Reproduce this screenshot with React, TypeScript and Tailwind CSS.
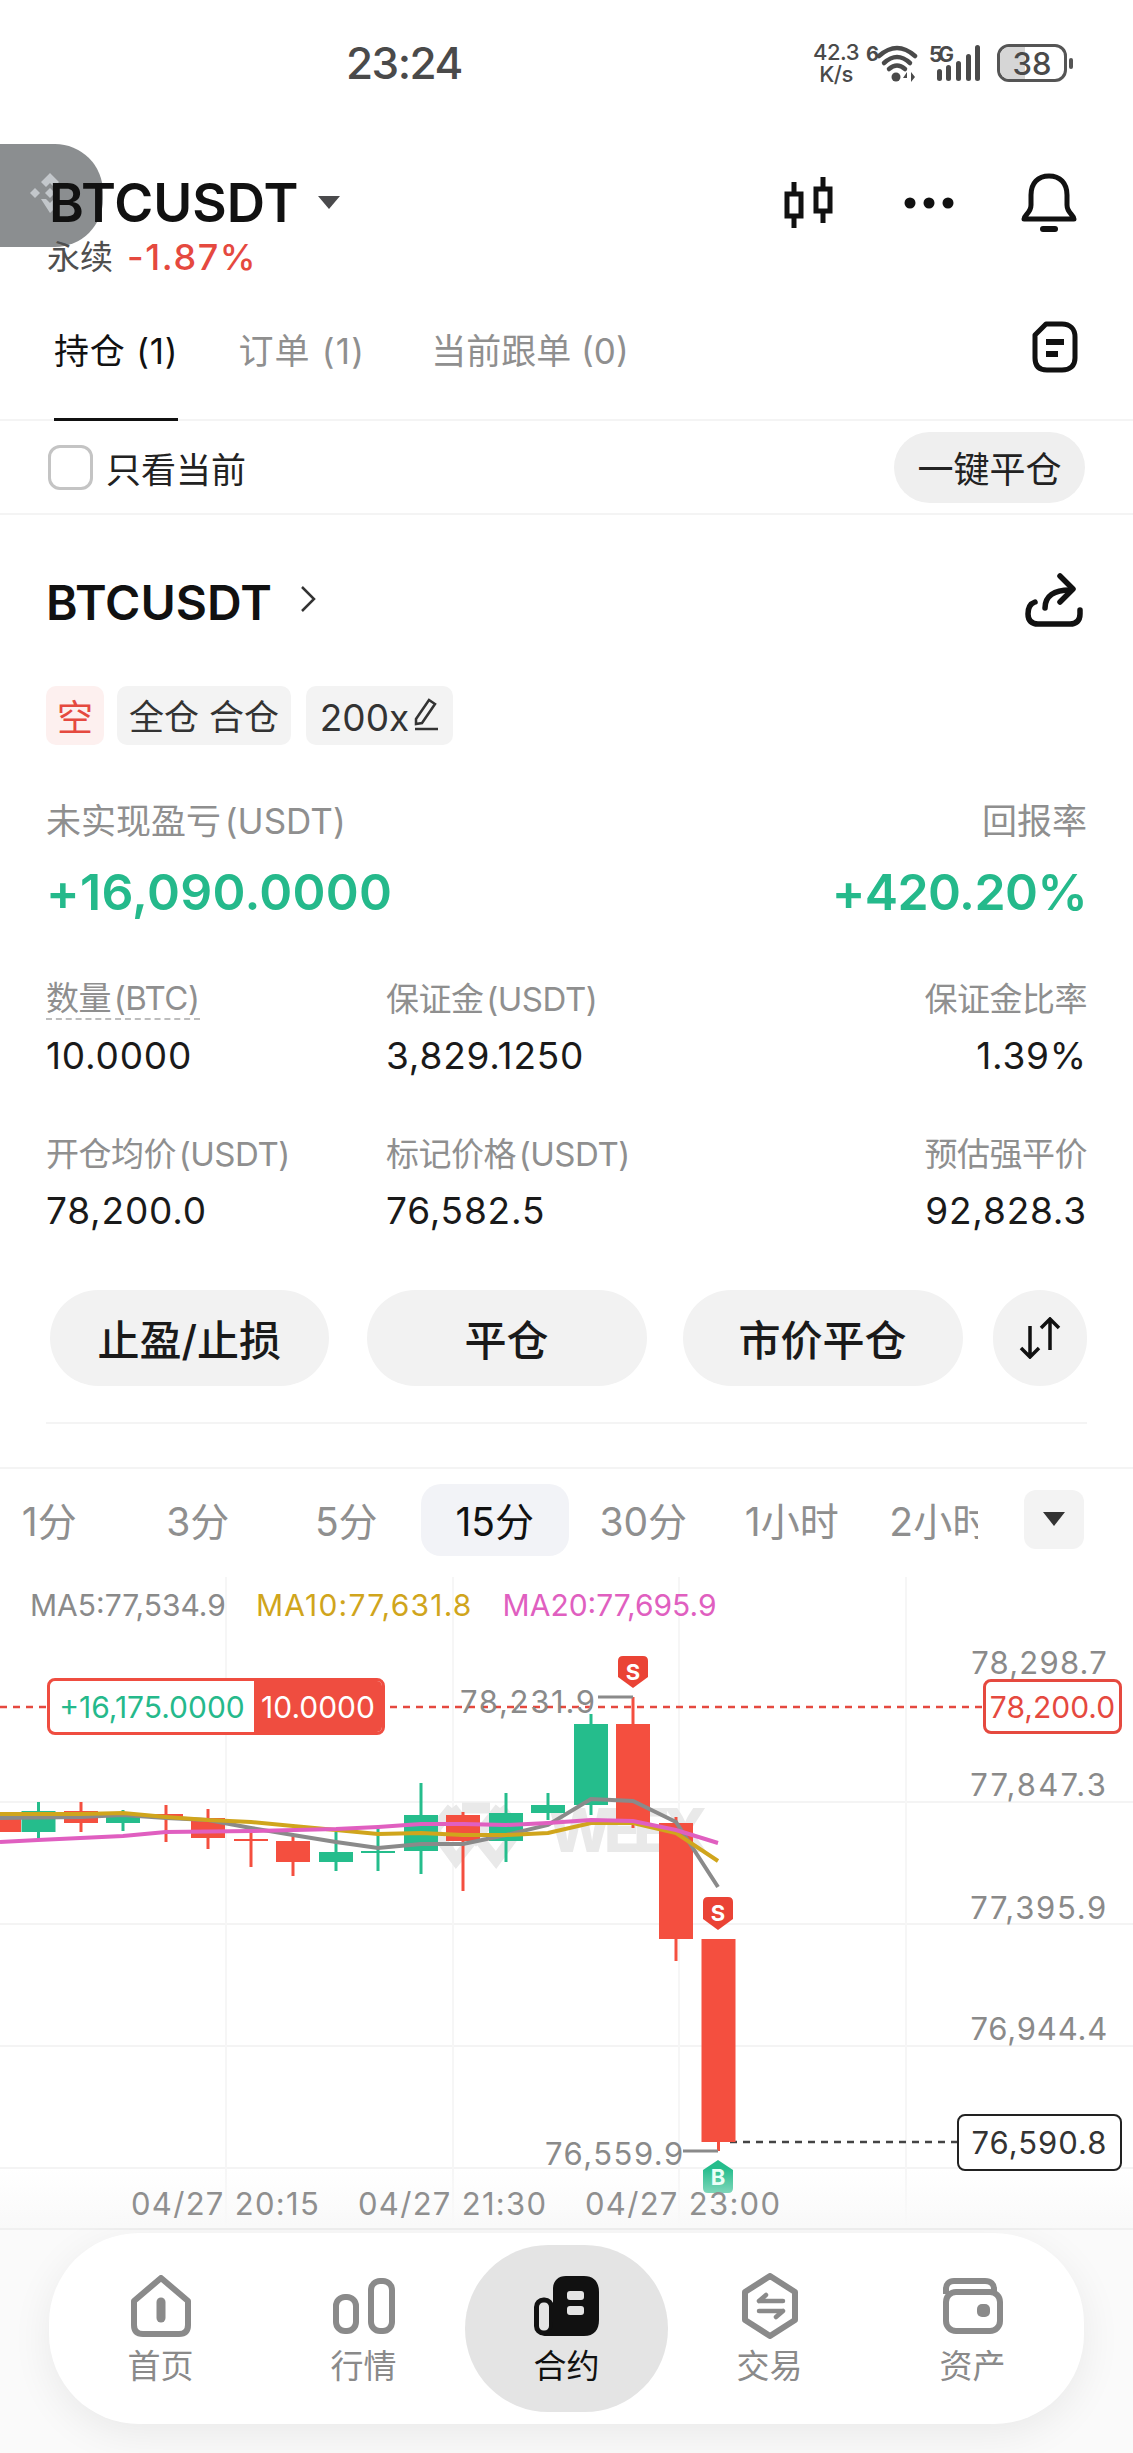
import type { ReactNode } from 'react';

const candles = [
  { x: 4, top: 1817, bottom: 1832, wickTop: 1817, wickBottom: 1832, up: false },
  { x: 38.5, top: 1811, bottom: 1832, wickTop: 1802, wickBottom: 1839, up: true },
  { x: 81, top: 1811, bottom: 1823, wickTop: 1802, wickBottom: 1832, up: false },
  { x: 123, top: 1814, bottom: 1823, wickTop: 1810, wickBottom: 1831, up: true },
  { x: 166, top: 1814, bottom: 1818, wickTop: 1805, wickBottom: 1842, up: false },
  { x: 208, top: 1818, bottom: 1838, wickTop: 1809, wickBottom: 1849, up: false },
  { x: 251, top: 1839, bottom: 1841, wickTop: 1830, wickBottom: 1867, up: false },
  { x: 293, top: 1841, bottom: 1862, wickTop: 1835, wickBottom: 1876, up: false },
  { x: 336, top: 1852, bottom: 1862, wickTop: 1832, wickBottom: 1871, up: true },
  { x: 378, top: 1851, bottom: 1852, wickTop: 1828, wickBottom: 1871, up: true },
  { x: 421, top: 1815, bottom: 1851, wickTop: 1783, wickBottom: 1874, up: true },
  { x: 463, top: 1815, bottom: 1841, wickTop: 1812, wickBottom: 1891, up: false },
  { x: 506, top: 1813, bottom: 1841, wickTop: 1793, wickBottom: 1862, up: true },
  { x: 548, top: 1805, bottom: 1813, wickTop: 1793, wickBottom: 1820, up: true },
  { x: 591, top: 1724, bottom: 1805, wickTop: 1714, wickBottom: 1815, up: true },
  { x: 633, top: 1724, bottom: 1823, wickTop: 1697, wickBottom: 1828, up: false },
  { x: 676, top: 1823, bottom: 1939, wickTop: 1817, wickBottom: 1961, up: false },
  { x: 718.5, top: 1939, bottom: 2142, wickTop: 1939, wickBottom: 2151, up: false },
];

const ma5 = '0,1818 81,1817 123,1815 166,1818 208,1820 251,1828 293,1835 336,1842 378,1848 421,1844 463,1844 506,1835 548,1825 591,1799 633,1801 676,1822 718,1887';
const ma10 = '0,1814 81,1814 123,1813 166,1817 208,1820 251,1822 293,1826 336,1830 378,1834 421,1833 463,1835 506,1835 548,1833 591,1823 633,1823 676,1833 718,1861';
const ma20 = '0,1842 38,1840 123,1836 166,1832 251,1831 336,1829 378,1827 421,1824 463,1824 506,1825 548,1823 591,1820 633,1821 676,1830 718,1843';

const frames = ['1分', '3分', '5分', '15分', '30分', '1小时', '2小时'];

function StatusBar() {
  return (
    <div className="h-[126px] flex items-center justify-between pl-[346px] pr-[60px] text-[#4a4a4a]">
      <span className="text-[44px] font-medium leading-none tracking-[-1.5px]">23:24</span>
      <div className="flex items-center">
        <div className="w-[46px] flex flex-col items-center text-[22px] leading-[22px] font-medium tracking-[-0.5px]">
          <span>42.3</span>
          <span>K/s</span>
        </div>
        <svg width="56" height="40" viewBox="0 0 56 40" className="ml-[7px]">
          <text x="0" y="18" fontSize="20" fontWeight="700" fill="#4a4a4a">6</text>
          <path d="M13 13 Q31 -3 49 13" fill="none" stroke="#4a4a4a" strokeWidth="4.5" strokeLinecap="round" />
          <path d="M18 20 Q31 8 44 20" fill="none" stroke="#4a4a4a" strokeWidth="4.5" strokeLinecap="round" />
          <path d="M23 26 Q31 19 39 26" fill="none" stroke="#4a4a4a" strokeWidth="4.5" strokeLinecap="round" />
          <circle cx="30" cy="34" r="4.5" fill="#4a4a4a" />
          <path d="M37 35 L41 29 V35 Z M45 29 L49 34 L45 39 Z" fill="#4a4a4a" />
        </svg>
        <svg width="56" height="38" viewBox="0 0 56 38" className="ml-[7px]">
          <text x="0" y="18" fontSize="21" fontWeight="700" fill="#4a4a4a" textLength="25">5G</text>
          <rect x="8" y="25" width="5" height="12" rx="2.5" fill="#4a4a4a" />
          <rect x="17" y="21" width="5" height="16" rx="2.5" fill="#4a4a4a" />
          <rect x="27" y="17" width="5" height="20" rx="2.5" fill="#4a4a4a" />
          <rect x="37" y="10" width="5" height="27" rx="2.5" fill="#4a4a4a" />
          <rect x="46" y="1" width="5" height="36" rx="2.5" fill="#4a4a4a" />
        </svg>
        <div className="ml-[12px] relative w-[70px] h-[38px] rounded-[12px] border-[3px] border-[#555] flex items-center justify-center overflow-hidden">
          <div className="absolute left-0 top-0 bottom-0 w-[25px] bg-[#d6d6d6]" />
          <span className="relative text-[31px] leading-none font-medium">38</span>
        </div>
        <div className="ml-[2px] w-[4px] h-[11px] rounded-full bg-[#555]" />
      </div>
    </div>
  );
}

function Header() {
  return (
    <div className="relative">
      <div className="absolute left-0 top-[18px] w-[103px] h-[103px] rounded-r-[48px] bg-[#8b8e90]">
        <svg width="42" height="40" viewBox="0 0 42 40" className="absolute left-[30px] top-[29px]" fill="#c3c7cb">
          <path d="M20 0 L29 9 L24 14 L20 10 L16 14 L11 9 Z" />
          <path d="M5 15 L10 20 L5 25 L0 20 Z" />
          <path d="M20 15 L25 20 L20 25 L15 20 Z" />
          <path d="M11 26 L16 26 L20 30 L24 26 L29 31 L20 40 Z" />
        </svg>
      </div>
      <div className="relative pl-[49px] pr-[56px] pt-[47px] flex items-center justify-between h-[107px]">
        <div className="flex items-center">
          <span className="text-[53px] font-semibold text-[#111] leading-none">BTCUSDT</span>
          <svg width="22" height="14" viewBox="0 0 22 14" className="ml-[20px]"><path d="M0 0 H22 L11 13 Z" fill="#4a4a4c" /></svg>
        </div>
        <div className="flex items-center">
          <svg width="50" height="52" viewBox="0 0 50 52" fill="none" stroke="#111" strokeWidth="5">
            <rect x="3" y="17" width="14" height="22" />
            <path d="M10 5 V17 M10 39 V51" />
            <rect x="32" y="12" width="14" height="22" />
            <path d="M39 0 V12 M39 34 V46" />
          </svg>
          <svg width="50" height="12" viewBox="0 0 50 12" fill="#111" className="ml-[70px]">
            <circle cx="6" cy="6" r="5.5" /><circle cx="25" cy="6" r="5.5" /><circle cx="44" cy="6" r="5.5" />
          </svg>
          <svg width="56" height="60" viewBox="0 0 56 60" fill="none" stroke="#111" strokeWidth="5" strokeLinejoin="round" className="ml-[67px]">
            <path d="M3 46 C3 42 10 40 10 32 V22 C10 10 17 3 28 3 C39 3 46 10 46 22 V32 C46 40 53 42 53 46 Z" />
            <path d="M22 56 H34" strokeLinecap="round" strokeWidth="6" />
          </svg>
        </div>
      </div>
      <div className="relative h-[40px] mt-[4px] pl-[47px] flex items-center">
        <span className="text-[33px] text-[#4f4f4f] leading-none">永续</span>
        <span className="ml-[14px] text-[36px] font-medium text-[#e5493f] leading-none tracking-[1.6px]">-1.87%</span>
      </div>
    </div>
  );
}

function Tabs() {
  return (
    <div className="h-[144px] border-b-2 border-[#f4f4f4] flex items-stretch justify-between pl-[54px] pr-[55px]">
      <div className="flex items-stretch">
        <div className="h-[144px] pt-[7px] border-b-[3px] border-[#111] flex items-center text-[35px] text-[#111] leading-none tracking-[0.8px]">持仓 (1)</div>
        <div className="ml-[60px] pt-[7px] flex items-center text-[35px] text-[#8f8f8f] leading-none tracking-[1.2px]">订单 (1)</div>
        <div className="ml-[66px] pt-[7px] flex items-center text-[35px] text-[#8f8f8f] leading-none">当前跟单 (0)</div>
      </div>
      <div className="flex items-center pb-[2px]">
        <svg width="46" height="52" viewBox="0 0 46 52" fill="none" stroke="#111" strokeWidth="5" strokeLinejoin="round">
          <path d="M14 3 H30 C38 3 43 8 43 16 V37 C43 45 38 49 30 49 H15 C7 49 3 45 3 37 V14 Z" />
          <path d="M14 21 H32 M14 33 H26" strokeWidth="6" />
        </svg>
      </div>
    </div>
  );
}

function FilterRow() {
  return (
    <div className="h-[94px] border-b-2 border-[#f4f4f4] flex items-center justify-between pl-[48px] pr-[48px]">
      <div className="flex items-center">
        <div className="w-[45px] h-[45px] rounded-[12px] border-[3px] border-[#c4c4c4]" />
        <span className="ml-[13px] pt-[6px] text-[35px] text-[#222] leading-none">只看当前</span>
      </div>
      <div className="w-[191px] h-[71px] pt-[5px] rounded-full bg-[#efefef] flex items-center justify-center text-[36px] text-[#222] leading-none">一键平仓</div>
    </div>
  );
}

function Stat({ label, value, right, dotted }: { label: string; value: string; right?: boolean; dotted?: boolean }) {
  return (
    <div className={right ? 'flex flex-col items-end' : 'flex flex-col items-start'}>
      <div className="h-[44px] flex items-center">
        <span className={dotted ? 'text-[33px] text-[#8f8f8f] leading-[40px] tracking-[-0.5px] [word-spacing:-6px] border-b-2 border-dashed border-[#bdbdbd]' : 'text-[33px] text-[#8f8f8f] leading-[40px] tracking-[-0.5px] [word-spacing:-6px]'}>{label}</span>
      </div>
      <div className="mt-[12px] h-[44px] flex items-center text-[37px] text-[#1a1a1a] leading-none tracking-[0.8px]">{value}</div>
    </div>
  );
}

function ActionButton({ children }: { children: ReactNode }) {
  return <div className="w-[280px] h-[96px] pt-[6px] rounded-full bg-[#f2f2f2] flex items-center justify-center text-[42px] font-medium text-[#1a1a1a] leading-none">{children}</div>;
}

function PositionCard() {
  return (
    <div className="px-[46px]">
      <div className="mt-[58px] h-[60px] flex items-center justify-between">
        <div className="flex items-center">
          <span className="text-[48px] font-semibold text-[#111] leading-none">BTCUSDT</span>
          <svg width="18" height="28" viewBox="0 0 18 28" fill="none" stroke="#333" strokeWidth="2.5" className="ml-[27px] mb-[8px]"><path d="M3 2 L15 14 L3 26" /></svg>
        </div>
        <svg width="60" height="56" viewBox="0 0 60 56" fill="none" stroke="#111" strokeWidth="5.5" strokeLinecap="round" strokeLinejoin="round" className="mr-[3px] mb-[6px]">
          <path d="M21 36 C21 24 30 18 46 18" />
          <path d="M36 4 L49 17 L36 30" />
          <path d="M11 30 C5 32 4 38 4 42 C4 49 8 52 14 52 H46 C52 52 56 49 56 42 V38" />
        </svg>
      </div>
      <div className="mt-[53px] flex items-stretch h-[59px]">
        <div className="w-[58px] pt-[4px] rounded-[10px] bg-[#fdf0ef] flex items-center justify-center text-[36px] text-[#e5493f] leading-none">空</div>
        <div className="ml-[13px] w-[174px] pt-[4px] rounded-[10px] bg-[#f3f3f3] flex items-center justify-center text-[35px] text-[#333] leading-none">全仓 合仓</div>
        <div className="ml-[15px] w-[147px] pt-[4px] rounded-[10px] bg-[#f3f3f3] flex items-center justify-center text-[37px] text-[#333] leading-none">
          200x
          <svg width="26" height="34" viewBox="0 0 26 34" fill="none" stroke="#333" strokeWidth="2.5" className="ml-[4px] mb-[8px]">
            <path d="M3 22 L16 3 L22 7 L9 26 L3 27 Z" />
            <path d="M2 32 H25" />
          </svg>
        </div>
      </div>
      <div className="mt-[54px] h-[44px] flex items-center justify-between text-[35px] text-[#8f8f8f] leading-none [word-spacing:-6px]">
        <span>未实现盈亏 (USDT)</span>
        <span>回报率</span>
      </div>
      <div className="mt-[18px] h-[62px] flex items-center justify-between text-[50px] font-semibold text-[#25b98b] leading-none">
        <span className="tracking-[0.3px]">+16,090.0000</span>
        <span className="tracking-[-0.6px]">+420.20%</span>
      </div>
      <div className="mt-[54px] grid grid-cols-[340px_1fr_auto]">
        <Stat label="数量 (BTC)" value="10.0000" dotted />
        <Stat label="保证金 (USDT)" value="3,829.1250" />
        <Stat label="保证金比率" value="1.39%" right />
      </div>
      <div className="mt-[55px] grid grid-cols-[340px_1fr_auto]">
        <Stat label="开仓均价 (USDT)" value="78,200.0" />
        <Stat label="标记价格 (USDT)" value="76,582.5" />
        <Stat label="预估强平价" value="92,828.3" right />
      </div>
      <div className="mt-[58px] pl-[4px] flex items-center">
        <ActionButton>止盈/止损</ActionButton>
        <div className="ml-[38px]"><ActionButton>平仓</ActionButton></div>
        <div className="ml-[36px]"><ActionButton>市价平仓</ActionButton></div>
        <div className="ml-[30px] w-[95px] h-[96px] rounded-full bg-[#f2f2f2] flex items-center justify-center">
          <svg width="42" height="42" viewBox="0 0 42 42" fill="none" stroke="#111" strokeWidth="3.5">
            <path d="M11 9 V40 M2 31 L11 40 L20 31" />
            <path d="M31 33 V2 M22 11 L31 2 L40 11" />
          </svg>
        </div>
      </div>
      <div className="mt-[36px] h-[2px] bg-[#f4f4f4]" />
    </div>
  );
}

function TimeFrames() {
  return (
    <div className="mt-[43px] border-t-2 border-[#f4f4f4] h-[110px] pb-[7px] flex items-center">
      <div className="w-[978px] overflow-hidden">
        <div className="flex ml-[-25px]">
          {frames.map((f) => (
            <div key={f} className={f === '15分' ? 'w-[148.5px] h-[72px] pt-[4px] shrink-0 rounded-[20px] bg-[#f2f3f7] flex items-center justify-center text-[39px] text-[#111] leading-none' : 'w-[148.5px] h-[72px] pt-[4px] shrink-0 flex items-center justify-center text-[39px] text-[#8f8f8f] leading-none'}>
              {f}
            </div>
          ))}
        </div>
      </div>
      <div className="ml-[46px] w-[60px] h-[59px] rounded-[12px] bg-[#f3f3f3] flex items-center justify-center">
        <svg width="22" height="15" viewBox="0 0 22 15"><path d="M0 0 H22 L11 14 Z" fill="#333" /></svg>
      </div>
    </div>
  );
}

function Chart() {
  return (
    <div className="relative h-[651px] overflow-hidden">
      <svg width="1133" height="651" viewBox="0 1577 1133 651" className="absolute left-0 top-0">
        {[1802, 1924, 2046, 2168].map((y) => <line key={y} x1="0" x2="1133" y1={y} y2={y} stroke="#f4f4f4" strokeWidth="2" />)}
        {[226, 453, 679, 906].map((x) => <line key={x} x1={x} x2={x} y1="1577" y2="2228" stroke="#f6f6f6" strokeWidth="2" />)}

        <g fill="none" stroke="#e9e9e9" strokeWidth="11" strokeLinejoin="miter">
          <path d="M452 1808 L434 1830 L456 1860 L476 1835 L496 1860 L518 1830 L500 1808" />
          <path d="M452 1808 L476 1838 L500 1808 M462 1808 H490" />
        </g>
        <text x="548" y="1852" fontSize="60" fontWeight="800" fill="#e9e9e9" fontFamily="Inter" textLength="160">WEEX</text>

        <line x1="0" x2="983" y1="1707" y2="1707" stroke="#e5493f" strokeWidth="2.5" strokeDasharray="7 6" />
        <line x1="730" x2="957" y1="2142" y2="2142" stroke="#444" strokeWidth="2.5" strokeDasharray="7 6" />

        {candles.map((c) => {
          const color = c.up ? '#25bd8c' : '#f44f3f';
          return (
            <g key={c.x}>
              <line x1={c.x} x2={c.x} y1={c.wickTop} y2={c.wickBottom} stroke={color} strokeWidth="3" />
              <rect x={c.x - 17} y={c.top} width="34" height={Math.max(c.bottom - c.top, 2)} fill={color} />
            </g>
          );
        })}

        <polyline points={ma5} fill="none" stroke="#8a8a8a" strokeWidth="4" />
        <polyline points={ma10} fill="none" stroke="#d0a51c" strokeWidth="4" />
        <polyline points={ma20} fill="none" stroke="#e05fc0" strokeWidth="4" />

        <text x="460" y="1713" fontSize="31" fill="#8a8a8a" letterSpacing="1.7">78,231.9</text>
        <path d="M598 1697 H633" stroke="#8a8a8a" strokeWidth="3" />
        <text x="545" y="2165" fontSize="31" fill="#8a8a8a" letterSpacing="1.5">76,559.9</text>
        <path d="M683 2151 H718" stroke="#8a8a8a" strokeWidth="3" />

        <text x="1108" y="1674" textAnchor="end" fontSize="31" fill="#8a8a8a" letterSpacing="1.2">78,298.7</text>
        <text x="1108" y="1796" textAnchor="end" fontSize="31" fill="#8a8a8a" letterSpacing="2.2">77,847.3</text>
        <text x="1108" y="1919" textAnchor="end" fontSize="31" fill="#8a8a8a" letterSpacing="1.7">77,395.9</text>
        <text x="1108" y="2040" textAnchor="end" fontSize="31" fill="#8a8a8a" letterSpacing="0.8">76,944.4</text>

        <path d="M623 1656 H643 Q648 1656 648 1661 V1677 L633 1688 L618 1677 V1661 Q618 1656 623 1656 Z" fill="#ea4335" />
        <text x="633" y="1680" textAnchor="middle" fontSize="22" fontWeight="700" fill="#fff">S</text>
        <path d="M708 1897 H728 Q733 1897 733 1902 V1919 L718 1930 L703 1919 V1902 Q703 1897 708 1897 Z" fill="#ea4335" />
        <text x="718" y="1921" textAnchor="middle" fontSize="22" fontWeight="700" fill="#fff">S</text>
        <path d="M718 2160 L733 2170 V2188 Q733 2193 728 2193 H708 Q703 2193 703 2188 V2170 Z" fill="#25bd8c" />
        <text x="718" y="2185" textAnchor="middle" fontSize="22" fontWeight="700" fill="#e8fff6">B</text>
      </svg>

      <div className="absolute left-0 right-0 bottom-0 h-[60px] bg-gradient-to-b from-transparent to-[#f9f9f9]" />

      <div className="relative pt-[10px] pl-[30px] flex items-center text-[30px] leading-[36px]">
        <span className="text-[#8a8a8a]">MA5:77,534.9</span>
        <span className="ml-[30px] text-[#d0a51c] tracking-[1.2px]">MA10:77,631.8</span>
        <span className="ml-[30px] text-[#e05fc0]">MA20:77,695.9</span>
      </div>

      <div className="absolute left-[47px] top-[101px] w-[338px] h-[57px] rounded-[8px] border-[3px] border-[#ef4d40] flex items-stretch overflow-hidden bg-white">
        <span className="w-[204px] flex items-center justify-center text-[30px] text-[#25b98b] leading-none">+16,175.0000</span>
        <span className="flex-1 bg-[#ef4d40] flex items-center justify-center text-[30px] text-white leading-none">10.0000</span>
      </div>
      <div className="absolute left-[983px] top-[102px] w-[139px] h-[55px] rounded-[8px] border-[3px] border-[#e5493f] bg-white flex items-center justify-center text-[30px] text-[#e5493f] leading-none">78,200.0</div>
      <div className="absolute left-[957px] top-[537px] w-[165px] h-[57px] rounded-[8px] border-2 border-[#222] bg-white flex items-center justify-center text-[31px] text-[#333] leading-none tracking-[1px]">76,590.8</div>

      <span className="absolute left-[131px] top-[609px] text-[31px] text-[#8f8f8f] leading-[36px] tracking-[1.3px]">04/27 20:15</span>
      <span className="absolute left-[358px] top-[609px] text-[31px] text-[#8f8f8f] leading-[36px] tracking-[1.3px]">04/27 21:30</span>
      <span className="absolute left-[585px] top-[609px] text-[31px] text-[#8f8f8f] leading-[36px] tracking-[1.3px]">04/27 23:00</span>
    </div>
  );
}

function NavItem({ label, active, children }: { label: string; active?: boolean; children: ReactNode }) {
  return (
    <div className={active ? 'my-[12px] rounded-full bg-[#e4e4e4] flex flex-col items-center justify-center' : 'my-[12px] flex flex-col items-center justify-center'}>
      <div className="h-[68px] flex items-center justify-center">{children}</div>
      <span className={active ? 'mt-[6px] text-[33px] text-[#111] leading-[40px]' : 'mt-[6px] text-[33px] text-[#8a8a8a] leading-[40px]'}>{label}</span>
    </div>
  );
}

function BottomNav() {
  return (
    <div className="h-[225px] border-t-2 border-[#f0f0f0] bg-[#fafafa] pl-[49px] pr-[49px] pt-[3px]">
      <div className="h-[191px] rounded-[90px] bg-white shadow-[0_10px_40px_rgba(0,0,0,0.07)] grid grid-cols-5 px-[10px]">
        <NavItem label="首页">
          <svg width="60" height="62" viewBox="0 0 60 62" fill="none" stroke="#8a8a8a" strokeWidth="6" strokeLinejoin="round">
            <path d="M30 3 L57 26 V50 C57 56 54 59 48 59 H12 C6 59 3 56 3 50 V26 Z" />
            <path d="M30 27 V43" strokeWidth="9" strokeLinecap="round" />
          </svg>
        </NavItem>
        <NavItem label="行情">
          <svg width="62" height="56" viewBox="0 0 62 56" fill="none" stroke="#8a8a8a" strokeWidth="6">
            <rect x="3" y="19" width="20" height="34" rx="9" />
            <rect x="38" y="3" width="21" height="50" rx="9" />
          </svg>
        </NavItem>
        <NavItem label="合约" active>
          <svg width="66" height="60" viewBox="0 0 66 60" fill="none">
            <rect x="2.5" y="24" width="15" height="33" rx="7" stroke="#111" strokeWidth="5" />
            <path d="M32 0 H50 C60 0 65 6 65 16 V44 C65 54 60 60 50 60 H8 C14 58 19 54 19 46 V13 C19 5 24 0 32 0 Z" fill="#111" />
            <rect x="33" y="15" width="17" height="9" rx="3" fill="#e4e4e4" />
            <rect x="33" y="30" width="17" height="9" rx="3" fill="#e4e4e4" />
          </svg>
        </NavItem>
        <NavItem label="交易">
          <svg width="60" height="66" viewBox="0 0 60 66" fill="none" stroke="#8a8a8a" strokeWidth="6" strokeLinejoin="round" strokeLinecap="round">
            <path d="M30 3 L55 19 V47 L30 63 L5 47 V19 Z" />
            <path d="M19 28 H43 M19 28 L26 22" strokeWidth="4.5" />
            <path d="M43 38 H19 M43 38 L36 44" strokeWidth="4.5" />
          </svg>
        </NavItem>
        <NavItem label="资产">
          <svg width="60" height="56" viewBox="0 0 60 56" fill="none" stroke="#8a8a8a" strokeWidth="6" strokeLinejoin="round">
            <path d="M3 16 V11 C3 6 6 3 11 3 H42 C48 3 51 6 51 11 V14" />
            <rect x="3" y="14" width="54" height="39" rx="10" />
            <rect x="34" y="26" width="13" height="13" rx="5" fill="#8a8a8a" stroke="none" />
          </svg>
        </NavItem>
      </div>
    </div>
  );
}

export default function App() {
  return (
    <div className="w-[1133px] h-[2453px] bg-white overflow-hidden font-['Inter','Noto_Sans_CJK_SC',sans-serif]">
      <StatusBar />
      <Header />
      <Tabs />
      <FilterRow />
      <PositionCard />
      <TimeFrames />
      <Chart />
      <BottomNav />
    </div>
  );
}
